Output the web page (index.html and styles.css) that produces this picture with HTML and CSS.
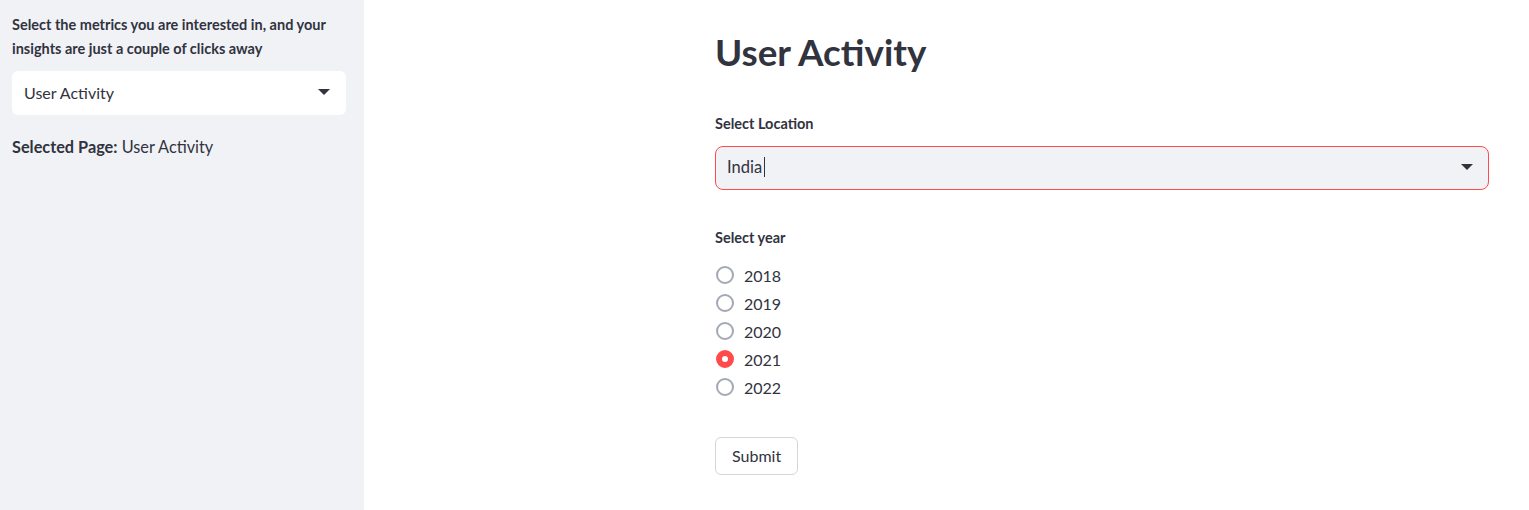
FILE: index.html
```html
<!DOCTYPE html>
<html>
<head>
<meta charset="utf-8">
<link rel="stylesheet" href="styles.css">
</head>
<body>
<div class="app">
  <aside class="sidebar">
    <p class="side-label">Select the metrics you are interested in, and your insights are just a couple of clicks away</p>
    <div class="side-select">
      <span>User Activity</span>
      <svg class="caret" width="12" height="6" viewBox="0 0 12 6"><path d="M0 0h12L6 6z" fill="#31333f"/></svg>
    </div>
    <p class="side-page"><strong>Selected Page:</strong> User Activity</p>
  </aside>
  <main class="main">
    <div class="content">
      <h1 class="title">User Activity</h1>
      <label class="field-label">Select Location</label>
      <div class="loc-select">
        <span class="loc-value">India<span class="cursor"></span></span>
        <svg class="caret" width="12" height="6" viewBox="0 0 12 6"><path d="M0 0h12L6 6z" fill="#31333f"/></svg>
      </div>
      <label class="field-label year-label">Select year</label>
      <div class="radios">
        <div class="radio"><span class="dot"></span><span>2018</span></div>
        <div class="radio"><span class="dot"></span><span>2019</span></div>
        <div class="radio"><span class="dot"></span><span>2020</span></div>
        <div class="radio"><span class="dot on"></span><span>2021</span></div>
        <div class="radio"><span class="dot"></span><span>2022</span></div>
      </div>
      <button class="submit">Submit</button>
    </div>
  </main>
</div>
</body>
</html>
```
FILE: styles.css
```css
* { box-sizing: border-box; }
html, body { margin: 0; padding: 0; }
body {
  font-family: "Lato", "Noto Sans", sans-serif;
  color: #31333f;
  background: #fff;
  width: 1529px;
  height: 510px;
  overflow: hidden;
}
.app { display: flex; height: 510px; }
.sidebar {
  width: 364px;
  flex: none;
  background: #f0f2f6;
  padding: 13px 18px 0 12px;
}
.side-label {
  margin: 0;
  font-size: 14.5px;
  font-weight: 700;
  line-height: 24px;
}
.side-select {
  margin-top: 10px;
  height: 44px;
  background: #fff;
  border-radius: 6px;
  display: flex;
  align-items: center;
  justify-content: space-between;
  padding: 0 16px 2px 12px;
  font-size: 16px;
}
.side-page {
  margin: 20px 0 0;
  font-size: 16.3px;
  line-height: 24px;
}
.side-page strong { font-weight: 700; }
.main { flex: 1; padding: 0 40px 0 351px; }
.content { display: flex; flex-direction: column; align-items: flex-start; }
.title {
  margin: 28px 0 0;
  font-size: 36.8px;
  font-weight: 700;
  line-height: 48px;
}
.field-label {
  display: block;
  margin-top: 36px;
  font-size: 14.5px;
  font-weight: 700;
  line-height: 24px;
}
.loc-select {
  margin-top: 10px;
  width: 774px;
  height: 44px;
  background: #f0f2f6;
  border: 1px solid #ff4b4b;
  border-radius: 8px;
  display: flex;
  align-items: center;
  justify-content: space-between;
  padding: 0 15px 2px 11px;
  font-size: 16.5px;
}
.loc-value { display: flex; align-items: center; }
.cursor {
  display: inline-block;
  width: 1px;
  height: 20px;
  background: #31333f;
  margin-left: 2px;
}
.year-label { margin-top: 36px; }
.radios { margin-top: 11px; display: flex; flex-direction: column; }
.radio {
  display: flex;
  align-items: center;
  height: 28px;
  font-size: 16px;
}
.dot {
  width: 18px;
  height: 18px;
  border-radius: 50%;
  border: 2px solid #a3a8b4;
  margin: 0 10px 0 1px;
  flex: none;
}
.dot.on {
  border: 6px solid #ff4b4b;
  background: #fff;
}
.submit {
  margin-top: 36px;
  height: 38px;
  padding: 0 16px 2px;
  background: #fff;
  border: 1px solid #d6d6d9;
  border-radius: 6px;
  font-family: inherit;
  font-size: 16px;
  color: #31333f;
}
```
